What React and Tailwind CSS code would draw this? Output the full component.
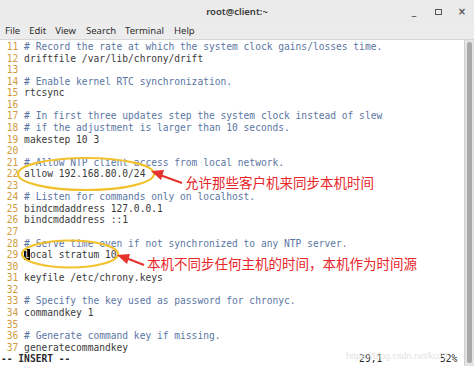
import React from "react";

const C = "c"; // comment
const N = "n"; // normal
const lines = [
  ["11", C, "# Record the rate at which the system clock gains/losses time."],
  ["12", N, "driftfile /var/lib/chrony/drift"],
  ["13", N, ""],
  ["14", C, "# Enable kernel RTC synchronization."],
  ["15", N, "rtcsync"],
  ["16", N, ""],
  ["17", C, "# In first three updates step the system clock instead of slew"],
  ["18", C, "# if the adjustment is larger than 10 seconds."],
  ["19", N, "makestep 10 3"],
  ["20", N, ""],
  ["21", C, "# Allow NTP client access from local network."],
  ["22", N, "allow 192.168.80.0/24"],
  ["23", N, ""],
  ["24", C, "# Listen for commands only on localhost."],
  ["25", N, "bindcmdaddress 127.0.0.1"],
  ["26", N, "bindcmdaddress ::1"],
  ["27", N, ""],
  ["28", C, "# Serve time even if not synchronized to any NTP server."],
  ["29", "cursor", "ocal stratum 10"],
  ["30", N, ""],
  ["31", N, "keyfile /etc/chrony.keys"],
  ["32", N, ""],
  ["33", C, "# Specify the key used as password for chronyc."],
  ["34", N, "commandkey 1"],
  ["35", N, ""],
  ["36", C, "# Generate command key if missing."],
  ["37", N, "generatecommandkey"],
];

export default function App() {
  return (
    <div className="relative w-[474px] h-[366px] overflow-hidden bg-white flex flex-col">
      {/* title bar */}
      <div className="relative h-[24px] bg-[#ebebeb] flex items-center justify-center shrink-0">
        <span className="text-[9.5px] font-semibold text-[#3a3a3a] [font-family:'Noto_Sans',sans-serif]">root@client:~</span>
        <div className="absolute right-0 top-0 h-full flex items-center text-[#555] [font-family:'DejaVu_Sans',sans-serif]">
          <span className="w-[24px] text-center text-[9px] font-bold leading-none">_</span>
          <span className="w-[24px] flex justify-center">
            <span className="w-[7px] h-[6px] border-[1.5px] border-[#555]"></span>
          </span>
          <span className="w-[24px] text-center text-[10px] font-bold leading-none">×</span>
        </div>
      </div>
      {/* menu bar */}
      <div className="h-[16px] bg-[#ececec] flex items-center shrink-0 border-b border-[#d6d6d6] text-[9.5px] text-[#2e2e2e] [font-family:'Noto_Sans',sans-serif]">
        <span className="ml-[5px]">File</span>
        <span className="ml-[9px]">Edit</span>
        <span className="ml-[9px]">View</span>
        <span className="ml-[10px]">Search</span>
        <span className="ml-[9px]">Terminal</span>
        <span className="ml-[10px]">Help</span>
      </div>
      {/* content */}
      <div className="flex flex-1 min-h-0">
        <div className="flex-1 pt-[1px] pl-[1px] text-[9.6px] leading-[11.57px] [font-family:'DejaVu_Sans_Mono',monospace] text-[#3a3a3a]">
          {lines.map(([num, kind, text]) => (
            <div key={num} className="h-[11.57px] whitespace-pre">
              <span className="text-[#cf9b3e]">{" " + num + " "}</span>
              {kind === "cursor" ? (
                <>
                  <span className="bg-black text-white">l</span>
                  <span>{text}</span>
                </>
              ) : (
                <span className={kind === C ? "text-[#5b76a3]" : ""}>{text}</span>
              )}
            </div>
          ))}
          <div className="h-[11.57px] whitespace-pre text-[#2a2a2a]">
            <span className="font-bold">-- INSERT --</span>
            <span>{" ".repeat(50) + "29,1" + " ".repeat(10) + "52%"}</span>
          </div>
        </div>
        {/* scrollbar */}
        <div className="w-[10px] bg-[#e4e4e4] border-l border-[#d0d0d0] flex justify-center pt-[2px] pb-[3px]">
          <div className="w-[5px] h-full bg-[#a9a9a9] rounded-[2px]"></div>
        </div>
      </div>

      {/* watermark */}
      <span className="absolute left-[346px] top-[350px] text-[9px] leading-[12px] text-[#e3e3e3] [font-family:'Liberation_Sans',sans-serif] whitespace-pre">https://blog.csdn.net/ko22</span>

      {/* annotations */}
      <svg className="absolute left-0 top-0 pointer-events-none" width="474" height="366">
        <ellipse cx="86" cy="174" rx="68" ry="16" fill="none" stroke="#f2c12e" strokeWidth="2.2" />
        <ellipse cx="70" cy="254" rx="48" ry="13.5" fill="none" stroke="#f2c12e" strokeWidth="2.2" />
        <line x1="160" y1="175" x2="182" y2="183" stroke="#e5322d" strokeWidth="2" />
        <polygon points="151,171 164,170 161,180" fill="#e5322d" />
        <line x1="126" y1="258" x2="144" y2="265" stroke="#e5322d" strokeWidth="2" />
        <polygon points="117,255 130,254 127,264" fill="#e5322d" />
      </svg>
      <span className="absolute left-[185px] top-[173px] text-[13.5px] leading-[18px] text-[#e8262a] whitespace-pre [font-family:'Noto_Sans_CJK_SC',sans-serif]">允许那些客户机来同步本机时间</span>
      <span className="absolute left-[147px] top-[254px] text-[13.5px] leading-[18px] text-[#e8262a] whitespace-pre [font-family:'Noto_Sans_CJK_SC',sans-serif]">本机不同步任何主机的时间，本机作为时间源</span>
    </div>
  );
}
